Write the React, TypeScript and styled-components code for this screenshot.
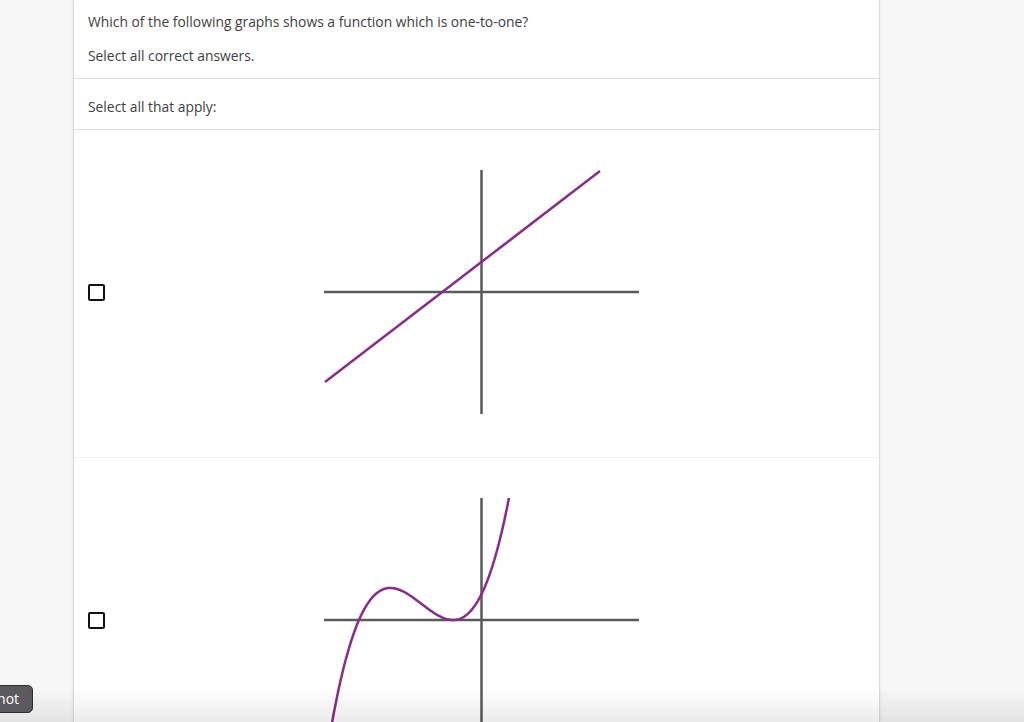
import React from "react";
import styled, { createGlobalStyle } from "styled-components";

const Global = createGlobalStyle`
  html, body { margin: 0; padding: 0; background: #f7f7f7; }
  body { font-family: "Open Sans", "Liberation Sans", sans-serif; color: #404040; }
  * { box-sizing: border-box; }
`;

const Page = styled.div`
  min-height: 722px;
  padding-left: 73px;
`;

const Card = styled.div`
  width: 807px;
  background: #fff;
  border-left: 1px solid #dcdcdc;
  border-right: 1px solid #dcdcdc;
  box-shadow: 0 0 4px rgba(0, 0, 0, 0.08);
`;

const Section = styled.div<{ $pad: string; $border?: string }>`
  padding: ${(p) => p.$pad};
  border-bottom: 1px solid ${(p) => p.$border || "#dedede"};
`;

const Text = styled.p<{ $mt?: number }>`
  margin: ${(p) => p.$mt || 0}px 0 0;
  font-size: 13.85px;
  line-height: 20px;
`;

const Option = styled.div<{ $last?: boolean }>`
  display: flex;
  align-items: center;
  padding: 40px 14px 42px;
  border-bottom: 1px solid ${(p) => (p.$last ? "transparent" : "#f1f1f1")};
`;

const Box = styled.span`
  width: 17px;
  height: 17px;
  border: 2px solid #111;
  border-radius: 2px;
  flex: none;
`;

const GraphWrap = styled.div`
  margin-left: 219px;
  width: 315px;
  height: 245px;
  flex: none;
`;

const Fade = styled.div`
  position: fixed;
  left: 0;
  right: 0;
  bottom: 0;
  height: 34px;
  pointer-events: none;
  background: linear-gradient(to bottom, rgba(0, 0, 0, 0), rgba(0, 0, 0, 0.08));
`;

const ShotButton = styled.button`
  position: fixed;
  left: -68px;
  bottom: 9px;
  height: 28px;
  padding: 0 13px;
  background: #5b5b5f;
  border: 1px solid #2e2e30;
  border-radius: 5px;
  color: #fff;
  font-family: "Open Sans", "Liberation Sans", sans-serif;
  font-size: 14px;
  line-height: 26px;
`;

const AXIS = "#5a5a5a";
const CURVE = "#8a2b8c";

function LineGraph() {
  return (
    <svg width="315" height="245" viewBox="0 0 315 245">
      <line x1="0" y1="122" x2="315" y2="122" stroke={AXIS} strokeWidth="2.5" />
      <line x1="157.5" y1="0" x2="157.5" y2="244" stroke={AXIS} strokeWidth="2.5" />
      <line x1="1" y1="212" x2="276" y2="1" stroke={CURVE} strokeWidth="2.5" />
    </svg>
  );
}

function CubicGraph() {
  const pts: string[] = [];
  const k = 32 / 123050;
  for (let x = 330; x <= 512; x += 1) {
    const y = 619 - k * (x - 359) * (x - 453) * (x - 453);
    pts.push(`${(x - 324).toFixed(1)},${(y - 497).toFixed(1)}`);
  }
  return (
    <svg width="315" height="245" viewBox="0 0 315 245">
      <defs>
        <clipPath id="cg">
          <rect x="0" y="0" width="315" height="245" />
        </clipPath>
      </defs>
      <line x1="0" y1="122" x2="315" y2="122" stroke={AXIS} strokeWidth="2.5" />
      <line x1="157.5" y1="0" x2="157.5" y2="245" stroke={AXIS} strokeWidth="2.5" />
      <polyline
        points={pts.join(" ")}
        fill="none"
        stroke={CURVE}
        strokeWidth="2.5"
        clipPath="url(#cg)"
      />
    </svg>
  );
}

export default function App() {
  return (
    <>
      <Global />
      <Page>
        <Card>
          <Section $pad="12px 14px 12px">
            <Text>Which of the following graphs shows a function which is one-to-one?</Text>
            <Text $mt={14}>Select all correct answers.</Text>
          </Section>
          <Section $pad="18px 14px 12px">
            <Text>Select all that apply:</Text>
          </Section>
          <Option>
            <Box />
            <GraphWrap>
              <LineGraph />
            </GraphWrap>
          </Option>
          <Option $last>
            <Box />
            <GraphWrap>
              <CubicGraph />
            </GraphWrap>
          </Option>
        </Card>
      </Page>
      <Fade />
      <ShotButton>Screenshot</ShotButton>
    </>
  );
}
